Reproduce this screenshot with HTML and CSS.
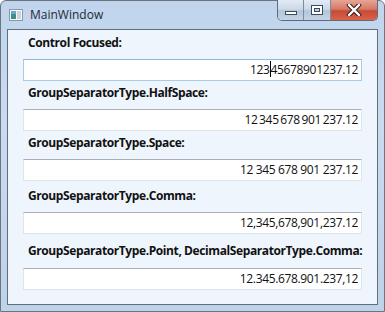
FILE: index.html
```html
<!DOCTYPE html>
<html lang="en">
<head>
    <meta charset="UTF-8">
    <title>MainWindow</title>
    <link rel="stylesheet" href="styles.css">
</head>
<body>
    <div class="window">
        <div class="titlebar">
            <svg class="app-icon" width="14" height="12" viewBox="0 0 14 12">
                <rect x="0.5" y="0.5" width="13" height="11" fill="#f4f7fa" stroke="#8c98a6"/>
                <rect x="2" y="2" width="5" height="8" fill="#3f8f86"/>
                <rect x="2" y="2" width="5" height="3" fill="#6aa6d8"/>
                <rect x="8" y="2" width="4" height="8" fill="#c9d4de"/>
            </svg>
            <span class="title">MainWindow</span>
            <div class="caption-buttons">
                <div class="cap-btn min">
                    <svg width="14" height="6" viewBox="0 0 14 6"><rect x="1.5" y="1.5" width="11" height="3" fill="#fff" stroke="#3b4a5c"/></svg>
                </div>
                <div class="cap-btn max">
                    <svg width="12" height="10" viewBox="0 0 12 10"><rect x="0.5" y="0.5" width="11" height="9" fill="none" stroke="#3b4a5c"/><rect x="2" y="2" width="8" height="6" fill="none" stroke="#fff" stroke-width="2"/><rect x="3.5" y="3.5" width="5" height="3" fill="none" stroke="#3b4a5c"/></svg>
                </div>
                <div class="cap-btn close">
                    <svg width="16" height="12" viewBox="0 0 16 12"><path d="M3 1 L13 11 M13 1 L3 11" stroke="#3a2420" stroke-width="4.5" stroke-linecap="round"/><path d="M3 1 L13 11 M13 1 L3 11" stroke="#fff" stroke-width="2.4" stroke-linecap="round"/></svg>
                </div>
            </div>
        </div>
        <div class="client">
            <div class="field">
                <div class="label">Control Focused:</div>
                <div class="textbox focused">123<span class="caret"></span>45678901237.12</div>
            </div>
            <div class="field">
                <div class="label">GroupSeparatorType.HalfSpace:</div>
                <div class="textbox">12&#8201;345&#8201;678&#8201;901&#8201;237.12</div>
            </div>
            <div class="field">
                <div class="label">GroupSeparatorType.Space:</div>
                <div class="textbox">12 345 678 901 237.12</div>
            </div>
            <div class="field wide">
                <div class="label">GroupSeparatorType.Comma:</div>
                <div class="textbox">12,345,678,901,237.12</div>
            </div>
            <div class="field wider">
                <div class="label">GroupSeparatorType.Point, DecimalSeparatorType.Comma:</div>
                <div class="textbox">12.345.678.901.237,12</div>
            </div>
        </div>
    </div>
</body>
</html>
```
FILE: styles.css
```css
body { margin: 0; font-family: "Open Sans", "Noto Sans", sans-serif; font-size: 12px; }
.window {
    width: 385px;
    height: 312px;
    box-sizing: border-box;
    border: 1px solid #6b7480;
    border-radius: 6px 6px 0 0;
    background: linear-gradient(180deg, #c0d5ec 0%, #c9dbef 40%, #bed2e8 100%);
    display: flex;
    flex-direction: column;
}
.titlebar { height: 28px; display: flex; align-items: flex-start; padding-left: 8px; }
.app-icon { margin-top: 8px; }
.title { margin: 6px 0 0 7px; color: #1e2a3a; font-size: 12px; line-height: 16px; }
.caption-buttons {
    margin-left: auto;
    margin-right: 6px;
    margin-top: -1px;
    display: flex;
    height: 20px;
    border: 1px solid #5d6b7c;
    border-top: none;
    border-radius: 0 0 5px 5px;
    overflow: hidden;
}
.cap-btn { display: flex; align-items: center; justify-content: center; }
.cap-btn.min, .cap-btn.max {
    width: 26px;
    background: linear-gradient(180deg, #e3ebf5 0%, #ccd9e8 45%, #b3c5da 55%, #c6d5e6 100%);
    border-right: 1px solid #7d8b9c;
}
.cap-btn.min { align-items: flex-end; padding-bottom: 4px; box-sizing: border-box; }
.cap-btn.close {
    width: 46px;
    background: linear-gradient(180deg, #e6a596 0%, #d67a68 45%, #c84a34 55%, #d8634a 100%);
}
.client {
    flex: 1;
    margin: 0 6px 6px 6px;
    border: 1px solid #5f6f80;
    background-color: #eef5fc;
    padding: 1px 15px 0 15px;
}
.label { font-weight: bold; color: #111; line-height: 16px; padding: 4px 0 8px 5px; white-space: nowrap; letter-spacing: -0.4px; }
.field.wide .label { padding-top: 7px; }
.field.wider .label { padding-top: 9px; padding-bottom: 9px; }
.textbox {
    height: 20px;
    border: 1px solid #dfe4ea;
    border-top-color: #abb0b8;
    background-color: #fff;
    text-align: right;
    padding-right: 3px;
    line-height: 20px;
    color: #111;
    letter-spacing: -0.35px;
}
.textbox.focused { border-color: #a8cbea; border-top-color: #8fb8de; }
.caret { display: inline-block; width: 1px; height: 16px; background-color: #000; vertical-align: -3px; }
```
